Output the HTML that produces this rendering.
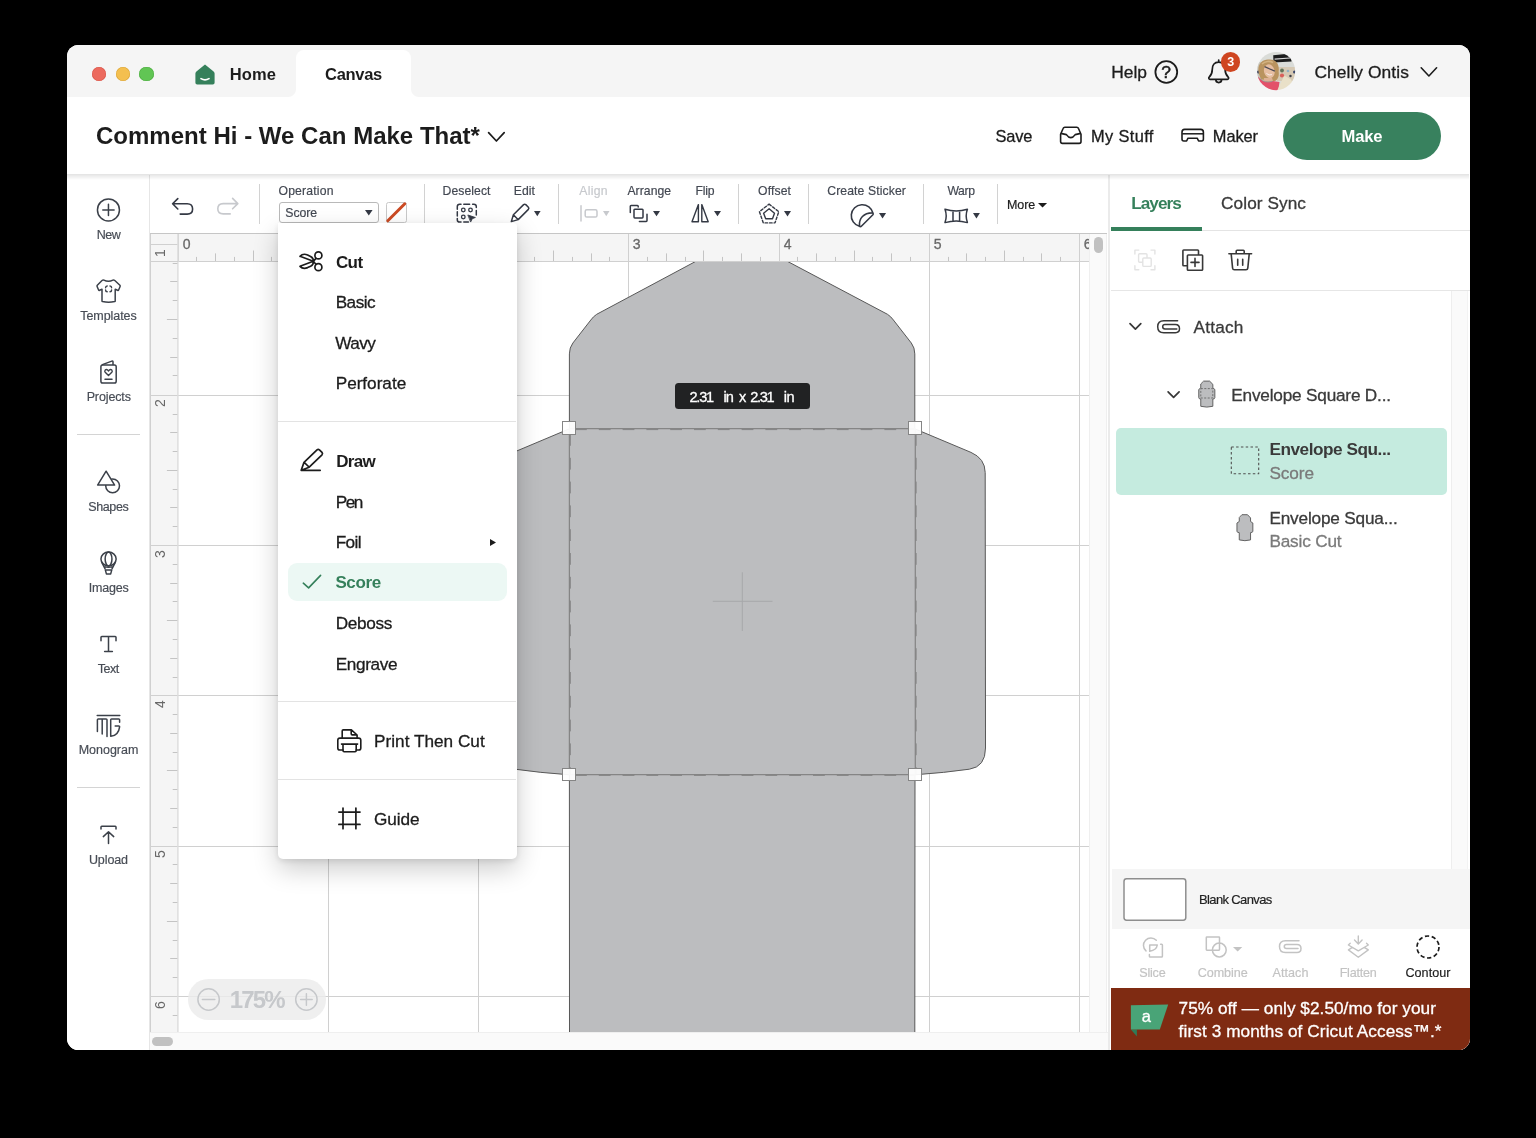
<!DOCTYPE html>
<html><head><meta charset="utf-8"><title>Design Space</title>
<style>
*{box-sizing:border-box;margin:0;padding:0}
html,body{width:1536px;height:1138px;background:#000;overflow:hidden}
body{font-family:"Liberation Sans",sans-serif;color:#1c1c1c;position:relative}
#win{position:absolute;left:67px;top:45px;width:1403px;height:1005px;border-radius:11.5px;overflow:hidden;background:#fff}
#pg{position:absolute;left:-67px;top:-45px;width:1536px;height:1138px;will-change:transform}
#pg div,#pg svg,#pg span{position:absolute}
.t{white-space:nowrap;line-height:30px;height:30px}
svg{overflow:visible}
#titlebar{left:66px;top:44px;width:1404px;height:53px;background:#f5f5f5}
#ctab{left:295.6px;top:50px;width:115.4px;height:48px;background:#fff;border-radius:8px 8px 0 0}
#header{left:66px;top:97px;width:1403px;height:78px;background:#fff}
#hshadow{left:66px;top:174px;width:1403px;height:6px;background:linear-gradient(rgba(0,0,0,.11),rgba(0,0,0,0));z-index:50}
#sidebar{left:66px;top:175px;width:84px;height:875px;background:#fff;border-right:1px solid #e6e6e6}
#toolbar{left:150px;top:175px;width:960px;height:58px;background:#fff}
#rpanel{left:1110px;top:175px;width:360px;height:875px;background:#fff}

</style></head>
<body>
<div id="win"><div id="pg">
<div id="titlebar"></div>
<div id="ctab"></div>
<div id="header"></div>
<div id="sidebar"></div>
<div id="toolbar"></div>
<div id="rpanel"></div>
<div id="hshadow"></div>
<!-- title -->
<div style="left:91.9px;top:66.7px;width:14.2px;height:14.2px;border-radius:50%;background:#ec6a5e;box-shadow:inset 0 0 0 0.6px #d9584c"></div>
<div style="left:115.7px;top:66.7px;width:14.2px;height:14.2px;border-radius:50%;background:#f4bf4f;box-shadow:inset 0 0 0 0.6px #dba63a"></div>
<div style="left:139.4px;top:66.7px;width:14.2px;height:14.2px;border-radius:50%;background:#61c554;box-shadow:inset 0 0 0 0.6px #4fae43"></div>
<svg style="left:195px;top:63.5px" width="20" height="21" viewBox="0 0 20 21"><path d="M10 0.6 L18.6 7.6 Q19.6 8.4 19.6 9.6 V18.8 Q19.6 20.6 17.8 20.6 H2.2 Q0.4 20.6 0.4 18.8 V9.6 Q0.4 8.4 1.4 7.6 Z" fill="#35805b"/><path d="M6 14.6 Q10 17.2 14 14.6" stroke="#fff" stroke-width="1.7" fill="none" stroke-linecap="round"/></svg>
<span class="t" style="left:229.70px;top:59.00px;font-size:16.5px;font-weight:700;color:#1c1c1c;letter-spacing:0.143px;">Home</span>
<span class="t" style="left:325.00px;top:59.00px;font-size:16.5px;font-weight:700;color:#1c1c1c;letter-spacing:-0.288px;">Canvas</span>
<div style="left:287.6px;top:89px;width:8px;height:8px;background:radial-gradient(circle at 0 0,#f5f5f5 7.5px,#fff 8.5px)"></div>
<div style="left:411px;top:89px;width:8px;height:8px;background:radial-gradient(circle at 100% 0,#f5f5f5 7.5px,#fff 8.5px)"></div>
<span class="t" style="left:1111.20px;top:57.00px;font-size:17.4px;font-weight:400;color:#1c1c1c;letter-spacing:-0.019px;-webkit-text-stroke:0.3px;">Help</span>
<svg style="left:1154px;top:60px" width="24" height="24" viewBox="0 0 24 24"><circle cx="12.3" cy="12" r="10.9" fill="none" stroke="#1c1c1c" stroke-width="1.8"/></svg>
<span class="t" style="left:1161.37px;top:57.00px;font-size:17.4px;font-weight:400;color:#1c1c1c;-webkit-text-stroke:0.3px;-webkit-text-stroke:0.5px;">?</span>
<svg style="left:1206px;top:58px" width="26" height="27" viewBox="0 0 26 27"><path d="M12.7 2 V4.2 M12.7 4.2 C8.2 4.2 6.3 7.6 6.3 11.2 C6.3 15.6 5.2 17.2 3.2 19.2 C2.4 20 2.8 21.3 4 21.3 H21.4 C22.6 21.3 23 20 22.2 19.2 C20.2 17.2 19.1 15.6 19.1 11.2 C19.1 7.6 17.2 4.2 12.7 4.2 Z M9.8 21.6 C9.8 23.4 11 24.6 12.7 24.6 C14.4 24.6 15.6 23.4 15.6 21.6" fill="none" stroke="#1c1c1c" stroke-width="1.7" stroke-linecap="round" stroke-linejoin="round"/></svg>
<div style="left:1221px;top:52.3px;width:19.4px;height:19.4px;border-radius:50%;background:#cf4520"></div>
<span class="t" style="left:1227.23px;top:47.00px;font-size:12.5px;font-weight:700;color:#fff;">3</span>
<svg style="left:1257px;top:52.4px" width="38.2" height="38.2" viewBox="0 0 38.2 38.2"><defs><clipPath id="av"><circle cx="19.1" cy="19.1" r="19.1"/></clipPath><filter id="bl" x="-10%" y="-10%" width="120%" height="120%"><feGaussianBlur stdDeviation="0.55"/></filter></defs><g clip-path="url(#av)"><g filter="url(#bl)">
<rect x="-2" y="-2" width="42" height="42" fill="#dadcd8"/>
<rect x="20" y="15" width="20" height="14" fill="#d6c9b4"/>
<rect x="0" y="10" width="8" height="16" fill="#c9c7bd"/>
<circle cx="1.5" cy="20" r="1.6" fill="#3d4763"/>
<circle cx="25" cy="18.5" r="1.9" fill="#62745a"/><circle cx="25" cy="23.5" r="2.1" fill="#d9605a"/><circle cx="31" cy="19" r="1.3" fill="#8fb0c4"/><circle cx="33.5" cy="24" r="1.2" fill="#3a3a44"/><circle cx="37.5" cy="20" r="1.5" fill="#39456a"/>
<path d="M16.2 3.2 L33.6 1.6 L34.6 9.6 L16.6 10.6 Z" fill="#1b1c1d"/>
<path d="M17.6 7.1 L33 6" stroke="#d8d8d8" stroke-width="1.1"/>
<path d="M2 22 C-0.5 13 5 7 12 7.6 C19 7 22.8 12.5 21.6 19.5 C22.6 24 20.4 28.5 17 29.5 L4 27.5 Z" fill="#b9935f"/>
<path d="M5 12 C8 9 13 8.6 16 10.6" stroke="#d3b281" stroke-width="1.6" fill="none"/>
<path d="M7 26 L15 26 L17 32 L6 32 Z" fill="#deb195"/>
<ellipse cx="12.3" cy="19.2" rx="5.3" ry="6.9" fill="#e6bea3" transform="rotate(-14 12.3 19.2)"/>
<path d="M7.6 14.6 L17.8 19.2" stroke="#4c4953" stroke-width="1.25"/>
<path d="M9.4 21.4 Q12 24 15 22.6" stroke="#f6ece6" stroke-width="1" fill="none"/>
<path d="M1 24.5 C5 29.5 10 30.6 15.5 29 L22.5 30 L21 40 H-1 Z" fill="#e3516b"/>
<path d="M2.2 25.6 C6 30 10.5 30.8 15.6 29.2" stroke="#7fae9e" stroke-width="0.7" fill="none"/>
<path d="M19.5 40 L26.8 24.6 Q27.8 23.6 29 24.4 L34 27.6 L38.5 36 V40 Z" fill="#e9e0c8"/>
</g></g></svg>
<span class="t" style="left:1314.40px;top:57.00px;font-size:17.4px;font-weight:400;color:#1c1c1c;letter-spacing:0.065px;-webkit-text-stroke:0.3px;">Chelly Ontis</span>
<svg style="left:1420px;top:66px" width="18" height="12" viewBox="0 0 18 12"><path d="M1.2 1.8 L8.9 10 L16.6 1.8" fill="none" stroke="#1c1c1c" stroke-width="1.6" stroke-linecap="round" stroke-linejoin="round"/></svg>
<!-- header -->
<span class="t" style="left:96.00px;top:120.50px;font-size:24px;font-weight:700;color:#1c1c1c;letter-spacing:0.012px;">Comment Hi - We Can Make That*</span>
<svg style="left:487px;top:131px" width="18" height="12" viewBox="0 0 18 12"><path d="M1.6 1.6 L9.4 10 L17.2 1.6" fill="none" stroke="#1c1c1c" stroke-width="1.7" stroke-linecap="round" stroke-linejoin="round"/></svg>
<span class="t" style="left:995.60px;top:121.00px;font-size:16.4px;font-weight:400;color:#1c1c1c;letter-spacing:-0.164px;-webkit-text-stroke:0.3px;">Save</span>
<svg style="left:1059px;top:126px" width="24" height="19" viewBox="0 0 24 19"><path d="M1.6 8.2 L4.2 2.2 Q4.6 1.2 5.8 1.2 H17.8 Q19 1.2 19.4 2.2 L22 8.2 V15.6 Q22 17.4 20.2 17.4 H3.4 Q1.6 17.4 1.6 15.6 Z" fill="none" stroke="#1c1c1c" stroke-width="1.6" stroke-linejoin="round"/><path d="M1.8 7.4 L7.4 8.6 Q9.4 11.6 11.8 11.6 Q14.2 11.6 16.2 8.6 L21.8 7.4" fill="none" stroke="#1c1c1c" stroke-width="1.6" stroke-linejoin="round"/></svg>
<span class="t" style="left:1091.00px;top:121.00px;font-size:16.4px;font-weight:400;color:#1c1c1c;letter-spacing:0.363px;-webkit-text-stroke:0.3px;">My Stuff</span>
<svg style="left:1181px;top:128px" width="24" height="15" viewBox="0 0 24 15"><path d="M3.6 1.4 H19.6 Q22.4 1.4 22.4 4.2 V11 Q22.4 13 20.6 13 H17.6 L16.2 10.2 H7 L5.6 13 H2.8 Q1 13 1 11 V4.2 Q1 1.4 3.6 1.4 Z" fill="none" stroke="#1c1c1c" stroke-width="1.6" stroke-linejoin="round"/><path d="M1.2 5.8 H22.2" stroke="#1c1c1c" stroke-width="1.5"/></svg>
<span class="t" style="left:1212.80px;top:121.00px;font-size:16.4px;font-weight:400;color:#1c1c1c;letter-spacing:-0.073px;-webkit-text-stroke:0.3px;">Maker</span>
<div style="left:1282.5px;top:112px;width:158.5px;height:47.5px;border-radius:24px;background:#38815e"></div>
<span class="t" style="left:1341.60px;top:121.50px;font-size:16.6px;font-weight:700;color:#fff;letter-spacing:-0.167px;">Make</span>
<!-- sidebar -->
<svg style="left:94px;top:195px" width="30" height="30" viewBox="94 195 30 30" fill="none" stroke="#3b4049" stroke-width="1.5" stroke-linecap="round" stroke-linejoin="round"><circle cx="108.45" cy="209.9" r="11"/><path d="M102.8 209.9 H114.1 M108.45 204.2 V215.6"/></svg>
<span class="t" style="left:96.85px;top:220.00px;font-size:12.5px;font-weight:400;color:#474c55;letter-spacing:-0.581px;-webkit-text-stroke:0.18px;">New</span>
<svg style="left:94px;top:276px" width="30" height="30" viewBox="94 276 30 30" fill="none" stroke="#3b4049" stroke-width="1.5" stroke-linecap="round" stroke-linejoin="round"><path d="M103.9 280.1 Q108.4 282.4 112.9 280.1 Q113.9 279.8 114.8 280.5 L119.9 285.2 Q120.4 285.8 120.1 286.5 L118.6 290 Q118.3 290.6 117.6 290.3 L115.2 289.2 V301 Q115.2 301.5 114.7 301.6 Q108.6 302.8 102.5 301.6 Q102 301.5 102 301 V289.2 L99.6 290.3 Q98.9 290.6 98.6 290 L97.1 286.5 Q96.8 285.8 97.3 285.2 L102 280.5 Q102.9 279.8 103.9 280.1 Z"/><path d="M105.6 287.8 Q105.6 286 107.2 286 M110 286 Q111.6 286 111.6 287.8 M111.6 290 Q111.6 291.8 110 291.8 M107.2 291.8 Q105.6 291.8 105.6 290" stroke-width="1.4"/></svg>
<span class="t" style="left:80.25px;top:301.00px;font-size:12.5px;font-weight:400;color:#474c55;letter-spacing:-0.062px;-webkit-text-stroke:0.18px;">Templates</span>
<svg style="left:96px;top:356px" width="26" height="30" viewBox="96 356 26 30" fill="none" stroke="#3b4049" stroke-width="1.5" stroke-linecap="round" stroke-linejoin="round"><rect x="100.9" y="364.9" width="15.3" height="18.2" rx="1.8"/><path d="M102.4 364.6 L111.8 361.1 Q113 360.7 113 361.9 V364.4"/><path d="M108.5 375.6 L105.2 372.3 Q104.3 371.2 105.2 370.1 Q106.4 369 107.6 370.1 L108.5 370.9 L109.4 370.1 Q110.6 369 111.8 370.1 Q112.7 371.2 111.8 372.3 Z" stroke-width="1.4"/><path d="M105 379.2 H112"/></svg>
<span class="t" style="left:86.65px;top:382.00px;font-size:12.5px;font-weight:400;color:#474c55;letter-spacing:-0.118px;-webkit-text-stroke:0.18px;">Projects</span>
<div style="left:77px;top:434.3px;width:63px;height:1px;background:#d4d4d4"></div>
<svg style="left:94px;top:466px" width="30" height="30" viewBox="94 466 30 30" fill="none" stroke="#3b4049" stroke-width="1.5" stroke-linecap="round" stroke-linejoin="round"><circle cx="112.6" cy="485.8" r="6.9"/><path d="M106.1 471.2 L114.6 485.1 H97.6 Z" fill="#fff"/></svg>
<span class="t" style="left:88.30px;top:492.00px;font-size:12.5px;font-weight:400;color:#474c55;letter-spacing:-0.395px;-webkit-text-stroke:0.18px;">Shapes</span>
<svg style="left:96px;top:548px" width="26" height="30" viewBox="96 548 26 30" fill="none" stroke="#3b4049" stroke-width="1.5" stroke-linecap="round" stroke-linejoin="round"><ellipse cx="108.55" cy="559" rx="7.6" ry="6.9"/><ellipse cx="108.55" cy="559" rx="3.4" ry="6.9"/><path d="M101.9 562.6 L105 568.6 M115.2 562.6 L112.1 568.6 M104.2 566.6 Q108.5 568 112.9 566.6 M105.3 569.9 H111.8 L110.7 573.9 H106.4 Z"/></svg>
<span class="t" style="left:88.75px;top:573.00px;font-size:12.5px;font-weight:400;color:#474c55;letter-spacing:-0.220px;-webkit-text-stroke:0.18px;">Images</span>
<svg style="left:96px;top:632px" width="26" height="24" viewBox="96 632 26 24" fill="none" stroke="#3b4049" stroke-width="1.5" stroke-linecap="round" stroke-linejoin="round"><path d="M101 640.8 V637.2 Q101 636.4 101.8 636.4 H115.2 Q116 636.4 116 637.2 V640.8 M108.5 636.6 V651.4 M104.6 651.5 H112.4"/></svg>
<span class="t" style="left:97.65px;top:654.00px;font-size:12.5px;font-weight:400;color:#474c55;letter-spacing:-0.413px;-webkit-text-stroke:0.18px;">Text</span>
<svg style="left:94px;top:712px" width="30" height="28" viewBox="94 712 30 28" fill="none" stroke="#3b4049" stroke-width="1.5" stroke-linecap="round" stroke-linejoin="round"><path d="M97.2 715.4 H119.8 M97.4 731.6 V719.8 Q97.4 718.9 98.3 718.9 H106.1 Q107 718.9 107 719.8 V736.4 M102.2 719 V734 M110.7 736.3 V719.8 Q110.7 718.9 111.6 718.9 H118.7 Q119.6 718.9 119.6 719.8 V722.2 M115.2 726 H118.8 Q119.7 726 119.6 726.9 Q118.6 735.4 110.9 736.3"/></svg>
<span class="t" style="left:78.65px;top:735.00px;font-size:12.5px;font-weight:400;color:#474c55;letter-spacing:-0.007px;-webkit-text-stroke:0.18px;">Monogram</span>
<div style="left:77px;top:787px;width:63px;height:1px;background:#d4d4d4"></div>
<svg style="left:96px;top:822px" width="26" height="26" viewBox="96 822 26 26" fill="none" stroke="#3b4049" stroke-width="1.5" stroke-linecap="round" stroke-linejoin="round"><path d="M101 829.1 V827 Q101 826.2 101.8 826.2 H115.2 Q116 826.2 116 827 V829.1 M108.5 843.5 V832 M103.3 836.6 L108.5 831.7 L113.7 836.6"/></svg>
<span class="t" style="left:88.95px;top:845.00px;font-size:12.5px;font-weight:400;color:#474c55;letter-spacing:-0.105px;-webkit-text-stroke:0.18px;">Upload</span>
<!-- toolbar -->
<svg style="left:170px;top:196px" width="26" height="22" viewBox="170 196 26 22" fill="none" stroke="#343944" stroke-width="1.6" stroke-linecap="round" stroke-linejoin="round"><path d="M177.8 198.6 L172.6 203.8 L177.8 209 M173 203.8 H187.2 Q192.6 203.8 192.6 209 Q192.6 214.1 187.2 214.1 H180.2"/></svg>
<svg style="left:215px;top:196px" width="26" height="22" viewBox="215 196 26 22" fill="none" stroke="#c7c9cd" stroke-width="1.6" stroke-linecap="round" stroke-linejoin="round"><path d="M232.6 198.4 L237.8 203.6 L232.6 208.8 M237.4 203.6 H223.2 Q217.8 203.6 217.8 208.8 Q217.8 213.9 223.2 213.9 H230.2"/></svg>
<div style="left:259.0px;top:184px;width:1px;height:40px;background:#d2d2d2"></div>
<span class="t" style="left:278.50px;top:176.00px;font-size:12.2px;font-weight:400;color:#434852;letter-spacing:0.180px;-webkit-text-stroke:0.18px;">Operation</span>
<div style="left:278.5px;top:202px;width:100.5px;height:20.5px;border:1px solid #b9b9b9;border-radius:3px;background:#fff"></div>
<span class="t" style="left:285.30px;top:198.00px;font-size:12.3px;font-weight:400;color:#434852;letter-spacing:-0.101px;-webkit-text-stroke:0.18px;">Score</span>
<svg style="left:364.8px;top:209.8px" width="7.60" height="5.40" viewBox="364.8 209.8 7.60 5.40"><path d="M364.8 209.8 H372.4 L368.6 215.2 Z" fill="#343944"/></svg>
<div style="left:385.8px;top:202px;width:20.8px;height:20.5px;border:1px solid #c9c9c9;border-radius:2.5px;background:#fff;overflow:hidden"></div>
<svg style="left:386px;top:202px" width="21" height="21" viewBox="386 202 21 21" fill="none" stroke="#cb4a23" stroke-width="3" stroke-linecap="round" stroke-linejoin="round"><path d="M387.8 220.8 L404.8 203.8"/></svg>
<div style="left:424.0px;top:184px;width:1px;height:40px;background:#d2d2d2"></div>
<span class="t" style="left:442.50px;top:176.00px;font-size:12.2px;font-weight:400;color:#434852;letter-spacing:0.077px;-webkit-text-stroke:0.18px;">Deselect</span>
<svg style="left:455px;top:201px" width="24" height="24" viewBox="455 201 24 24" fill="none" stroke="#343944" stroke-width="1.5" stroke-linecap="round" stroke-linejoin="round"><path d="M457.3 209.3 V206.6 Q457.3 204.2 459.7 204.2 H461 M463.8 204.2 H469.6 M472.6 204.2 H473.9 Q476.3 204.2 476.3 206.6 V207.6 M476.3 210.6 V215 M457.3 211.8 V216 M457.3 218.6 V219.7 Q457.3 222.1 459.7 222.1 H461 M463.8 222.1 H468.4"/><circle cx="463.3" cy="210" r="1.8" stroke-width="1.3"/><circle cx="470.5" cy="210" r="1.8" stroke-width="1.3"/><circle cx="463.3" cy="217" r="1.8" stroke-width="1.3"/><path d="M468.2 215.1 L475.4 217.5 L472.3 218.7 L470.8 221.7 Z" fill="#343944" stroke-width="0.8"/></svg>
<span class="t" style="left:513.80px;top:176.00px;font-size:12.2px;font-weight:400;color:#434852;letter-spacing:0.052px;-webkit-text-stroke:0.18px;">Edit</span>
<svg style="left:508px;top:201px" width="24" height="24" viewBox="508 201 24 24" fill="none" stroke="#343944" stroke-width="1.5" stroke-linecap="round" stroke-linejoin="round"><path d="M511.3 221.6 L513.4 214.8 L523.6 204.6 Q524.7 203.7 525.8 204.6 L528.4 207.2 Q529.3 208.3 528.4 209.4 L518.2 219.6 Z M513.6 214.9 L518 219.4"/></svg>
<svg style="left:534px;top:210.7px" width="6.60" height="5.30" viewBox="534 210.7 6.60 5.30"><path d="M534 210.7 H540.6 L537.3 216 Z" fill="#343944"/></svg>
<div style="left:558.0px;top:184px;width:1px;height:40px;background:#d2d2d2"></div>
<span class="t" style="left:579.25px;top:176.00px;font-size:12.2px;font-weight:400;color:#c7c9cd;letter-spacing:0.289px;-webkit-text-stroke:0.18px;">Align</span>
<svg style="left:579px;top:203px" width="22" height="20" viewBox="579 203 22 20" fill="none" stroke="#c7c9cd" stroke-width="1.5" stroke-linecap="round" stroke-linejoin="round"><path d="M581 205.8 V221"/><rect x="585.2" y="209.8" width="11.8" height="7.2" rx="1.6"/></svg>
<svg style="left:603.1px;top:210.7px" width="6.50" height="5.30" viewBox="603.1 210.7 6.50 5.30"><path d="M603.1 210.7 H609.6 L606.35 216 Z" fill="#c7c9cd"/></svg>
<span class="t" style="left:627.40px;top:176.00px;font-size:12.2px;font-weight:400;color:#434852;letter-spacing:0.061px;-webkit-text-stroke:0.18px;">Arrange</span>
<svg style="left:628px;top:203px" width="22" height="21" viewBox="628 203 22 21" fill="none" stroke="#343944" stroke-width="1.5" stroke-linecap="round" stroke-linejoin="round"><rect x="634" y="209.3" width="9" height="8.6" rx="0.8"/><path d="M630.3 212.6 V206.2 Q630.3 205.4 631.1 205.4 H637.4 Q638.2 205.4 638.2 206.2 V207 M647 214.2 V220.6 Q647 221.4 646.2 221.4 H639.4"/></svg>
<svg style="left:653.1px;top:210.7px" width="7.00" height="5.30" viewBox="653.1 210.7 7.00 5.30"><path d="M653.1 210.7 H660.1 L656.6 216 Z" fill="#343944"/></svg>
<span class="t" style="left:695.40px;top:176.00px;font-size:12.2px;font-weight:400;color:#434852;letter-spacing:-0.147px;-webkit-text-stroke:0.18px;">Flip</span>
<svg style="left:689px;top:202px" width="22" height="22" viewBox="689 202 22 22" fill="none" stroke="#343944" stroke-width="1.4" stroke-linecap="round" stroke-linejoin="round"><path d="M698.4 204.6 V221.7 H692 Z M701.8 204.6 V221.7 H708.2 Z"/></svg>
<svg style="left:714.3px;top:210.7px" width="7.00" height="5.30" viewBox="714.3 210.7 7.00 5.30"><path d="M714.3 210.7 H721.3 L717.8 216 Z" fill="#343944"/></svg>
<div style="left:738.3px;top:184px;width:1px;height:40px;background:#d2d2d2"></div>
<span class="t" style="left:758.05px;top:176.00px;font-size:12.2px;font-weight:400;color:#434852;letter-spacing:0.114px;-webkit-text-stroke:0.18px;">Offset</span>
<svg style="left:757px;top:202px" width="24" height="24" viewBox="757 202 24 24" fill="none" stroke="#343944" stroke-width="1.5" stroke-linecap="round" stroke-linejoin="round"><path d="M769.1 204.1 L778.8 211.7 L775 222.9 H763.3 L759.4 211.7 Z" stroke-dasharray="2.6 1.9" stroke-width="1.4"/><path d="M769.1 208.8 L774.5 213.2 L772.5 218.8 H765.7 L763.6 213.2 Z" stroke-width="1.4"/></svg>
<svg style="left:783.6px;top:210.7px" width="7.00" height="5.50" viewBox="783.6 210.7 7.00 5.50"><path d="M783.6 210.7 H790.6 L787.1 216.2 Z" fill="#343944"/></svg>
<div style="left:808.1px;top:184px;width:1px;height:40px;background:#d2d2d2"></div>
<span class="t" style="left:827.25px;top:176.00px;font-size:12.2px;font-weight:400;color:#434852;letter-spacing:0.109px;-webkit-text-stroke:0.18px;">Create Sticker</span>
<svg style="left:848px;top:202px" width="28" height="28" viewBox="848 202 28 28" fill="none" stroke="#343944" stroke-width="1.6" stroke-linecap="round" stroke-linejoin="round"><path d="M873 213.2 A11 11 0 1 0 859.4 226.3 Q860.6 227 861.6 226 L872.9 214.8 Q873.5 214 873 213.2 M859.5 226 C858.7 218.2 863.8 212.8 872.4 212.9"/></svg>
<svg style="left:878.9px;top:213.2px" width="7.10" height="5.40" viewBox="878.9 213.2 7.10 5.40"><path d="M878.9 213.2 H886 L882.45 218.6 Z" fill="#343944"/></svg>
<div style="left:923.1px;top:184px;width:1px;height:40px;background:#d2d2d2"></div>
<span class="t" style="left:947.40px;top:176.00px;font-size:12.2px;font-weight:400;color:#434852;letter-spacing:-0.357px;-webkit-text-stroke:0.18px;">Warp</span>
<svg style="left:942px;top:207px" width="28" height="18" viewBox="942 207 28 18" fill="none" stroke="#343944" stroke-width="1.5" stroke-linecap="round" stroke-linejoin="round"><path d="M945 209.2 Q956.2 212.6 967.4 209.2 Q965 215.8 967.4 222.6 Q956.2 219.2 945 222.6 Q947.4 215.8 945 209.2 Z M953 210.9 V220.8 M959.6 210.9 V220.8"/></svg>
<svg style="left:973.4px;top:213.2px" width="6.90" height="5.40" viewBox="973.4 213.2 6.90 5.40"><path d="M973.4 213.2 H980.3 L976.8499999999999 218.6 Z" fill="#343944"/></svg>
<div style="left:996.9px;top:184px;width:1px;height:40px;background:#d2d2d2"></div>
<span class="t" style="left:1007.00px;top:190.00px;font-size:12.5px;font-weight:400;color:#1c1c1c;letter-spacing:-0.100px;-webkit-text-stroke:0.18px;">More</span>
<svg style="left:1037.6px;top:203.2px" width="9.10" height="4.40" viewBox="1037.6 203.2 9.10 4.40"><path d="M1037.6 203.2 H1046.7 L1042.15 207.6 Z" fill="#1c1c1c"/></svg>
<!-- canvas -->
<div style="left:150px;top:233px;width:940px;height:800px;background:#fff"></div>
<svg style="left:0;top:0" width="1536" height="1138" viewBox="0 0 1536 1138" fill="none" stroke="#d0d0d0" stroke-width="1"><path d="M328.5 262 V1032"/><path d="M478.5 262 V1032"/><path d="M628.5 262 V1032"/><path d="M779.5 262 V1032"/><path d="M929.5 262 V1032"/><path d="M1079.5 262 V1032"/><path d="M178 395.5 H1090"/><path d="M178 545.5 H1090"/><path d="M178 695.5 H1090"/><path d="M178 846.5 H1090"/><path d="M178 996.5 H1090"/></svg>
<svg style="left:178px;top:262px" width="912" height="770" viewBox="178 262 912 770"><path d="M717 250 H766 L887.5 314.3 Q891 316.6 893.4 320 L911.3 343 Q914.8 347.6 914.8 353.9 L914.8 428.8 L971 452.4 Q985 458.4 985.2 472.5 L985.5 748 Q985.5 766.8 969.4 769.2 Q945 772.7 915 774.8 L914.8 1040 H569.5 L569.4 774.8 Q539.4 772.7 515 769.2 Q498.9 766.8 498.9 748 L499.2 472.5 Q499.4 458.4 513.4 452.4 L569.4 428.8 L569.4 353.9 Q569.4 347.6 572.9 343 L590.8 320 Q593.2 316.6 596.7 314.3 Z" fill="#bcbdbf" stroke="#585858" stroke-width="1"/><g fill="none" stroke="#858585" stroke-width="1.25"><path d="M569.4 428.7 H915 M569.4 774.7 H915 M569.4 428.7 V774.7 M915.3 428.7 V774.7"/></g><g fill="none" stroke="#848484" stroke-width="1" stroke-dasharray="11.8 12"><path d="M575 429.6 H915 M575 775.4 H915 M570.3 434 V774.7 M916.1 434 V774.7"/></g><path d="M712.8 601.3 H772.5 M742.3 572.3 V631" stroke="#a7a8aa" stroke-width="1" fill="none"/></svg>
<div style="left:562.1px;top:421.09999999999997px;width:13.6px;height:13.6px;background:rgba(255,255,255,.94);border:1px solid #858585"></div>
<div style="left:908.3000000000001px;top:421.09999999999997px;width:13.6px;height:13.6px;background:rgba(255,255,255,.94);border:1px solid #858585"></div>
<div style="left:562.1px;top:767.8000000000001px;width:13.6px;height:13.6px;background:rgba(255,255,255,.94);border:1px solid #858585"></div>
<div style="left:908.3000000000001px;top:767.8000000000001px;width:13.6px;height:13.6px;background:rgba(255,255,255,.94);border:1px solid #858585"></div>
<div style="left:674.8px;top:383.3px;width:135.3px;height:25.4px;border-radius:3.5px;background:#212223"></div>
<span class="t" style="left:689.50px;top:382.00px;font-size:14.6px;font-weight:400;color:#fff;letter-spacing:-1.266px;-webkit-text-stroke:0.3px;">2.31</span>
<span class="t" style="left:723.60px;top:382.00px;font-size:14.6px;font-weight:400;color:#fff;letter-spacing:-1.088px;-webkit-text-stroke:0.3px;">in</span>
<span class="t" style="left:739.10px;top:382.00px;font-size:14.6px;font-weight:400;color:#fff;-webkit-text-stroke:0.3px;">x</span>
<span class="t" style="left:750.20px;top:382.00px;font-size:14.6px;font-weight:400;color:#fff;letter-spacing:-1.332px;-webkit-text-stroke:0.3px;">2.31</span>
<span class="t" style="left:783.80px;top:382.00px;font-size:14.6px;font-weight:400;color:#fff;letter-spacing:-0.488px;-webkit-text-stroke:0.3px;">in</span>
<div style="left:150px;top:233px;width:957px;height:29px;background:#f5f5f5"></div>
<svg style="left:0;top:0" width="1536" height="1138" viewBox="0 0 1536 1138" fill="none" stroke-width="1"><path d="M178.5 234 V262" stroke="#d0d0d0"/><path d="M196.5 256.9 V262" stroke="#c4c4c4"/><path d="M215.5 253.4 V262" stroke="#c4c4c4"/><path d="M234.5 256.9 V262" stroke="#c4c4c4"/><path d="M253.5 250.5 V262" stroke="#c4c4c4"/><path d="M271.5 256.9 V262" stroke="#c4c4c4"/><path d="M290.5 253.4 V262" stroke="#c4c4c4"/><path d="M309.5 256.9 V262" stroke="#c4c4c4"/><path d="M328.5 234 V262" stroke="#d0d0d0"/><path d="M347.5 256.9 V262" stroke="#c4c4c4"/><path d="M365.5 253.4 V262" stroke="#c4c4c4"/><path d="M384.5 256.9 V262" stroke="#c4c4c4"/><path d="M403.5 250.5 V262" stroke="#c4c4c4"/><path d="M422.5 256.9 V262" stroke="#c4c4c4"/><path d="M440.5 253.4 V262" stroke="#c4c4c4"/><path d="M459.5 256.9 V262" stroke="#c4c4c4"/><path d="M478.5 234 V262" stroke="#d0d0d0"/><path d="M497.5 256.9 V262" stroke="#c4c4c4"/><path d="M516.5 253.4 V262" stroke="#c4c4c4"/><path d="M534.5 256.9 V262" stroke="#c4c4c4"/><path d="M553.5 250.5 V262" stroke="#c4c4c4"/><path d="M572.5 256.9 V262" stroke="#c4c4c4"/><path d="M591.5 253.4 V262" stroke="#c4c4c4"/><path d="M609.5 256.9 V262" stroke="#c4c4c4"/><path d="M628.5 234 V262" stroke="#d0d0d0"/><path d="M647.5 256.9 V262" stroke="#c4c4c4"/><path d="M666.5 253.4 V262" stroke="#c4c4c4"/><path d="M685.5 256.9 V262" stroke="#c4c4c4"/><path d="M703.5 250.5 V262" stroke="#c4c4c4"/><path d="M722.5 256.9 V262" stroke="#c4c4c4"/><path d="M741.5 253.4 V262" stroke="#c4c4c4"/><path d="M760.5 256.9 V262" stroke="#c4c4c4"/><path d="M779.5 234 V262" stroke="#d0d0d0"/><path d="M797.5 256.9 V262" stroke="#c4c4c4"/><path d="M816.5 253.4 V262" stroke="#c4c4c4"/><path d="M835.5 256.9 V262" stroke="#c4c4c4"/><path d="M854.5 250.5 V262" stroke="#c4c4c4"/><path d="M872.5 256.9 V262" stroke="#c4c4c4"/><path d="M891.5 253.4 V262" stroke="#c4c4c4"/><path d="M910.5 256.9 V262" stroke="#c4c4c4"/><path d="M929.5 234 V262" stroke="#d0d0d0"/><path d="M948.5 256.9 V262" stroke="#c4c4c4"/><path d="M966.5 253.4 V262" stroke="#c4c4c4"/><path d="M985.5 256.9 V262" stroke="#c4c4c4"/><path d="M1004.5 250.5 V262" stroke="#c4c4c4"/><path d="M1023.5 256.9 V262" stroke="#c4c4c4"/><path d="M1041.5 253.4 V262" stroke="#c4c4c4"/><path d="M1060.5 256.9 V262" stroke="#c4c4c4"/><path d="M1079.5 234 V262" stroke="#d0d0d0"/><path d="M150 261.5 H1089" stroke="#d0d0d0"/></svg>
<span class="t" style="left:182.70px;top:229.00px;font-size:14px;font-weight:400;color:#686868;-webkit-text-stroke:0.3px;">0</span>
<span class="t" style="left:332.70px;top:229.00px;font-size:14px;font-weight:400;color:#686868;-webkit-text-stroke:0.3px;">1</span>
<span class="t" style="left:482.70px;top:229.00px;font-size:14px;font-weight:400;color:#686868;-webkit-text-stroke:0.3px;">2</span>
<span class="t" style="left:632.70px;top:229.00px;font-size:14px;font-weight:400;color:#686868;-webkit-text-stroke:0.3px;">3</span>
<span class="t" style="left:783.70px;top:229.00px;font-size:14px;font-weight:400;color:#686868;-webkit-text-stroke:0.3px;">4</span>
<span class="t" style="left:933.70px;top:229.00px;font-size:14px;font-weight:400;color:#686868;-webkit-text-stroke:0.3px;">5</span>
<span class="t" style="left:1083.70px;top:229.00px;font-size:14px;font-weight:400;color:#686868;-webkit-text-stroke:0.3px;">6</span>
<div style="left:150px;top:234px;width:28px;height:798px;background:#f5f5f5"></div>
<svg style="left:0;top:0" width="1536" height="1138" viewBox="0 0 1536 1138" fill="none" stroke-width="1"><path d="M150.5 244.5 H178" stroke="#d0d0d0"/><path d="M172.7 263.5 H178" stroke="#c4c4c4"/><path d="M170.2 281.5 H178" stroke="#c4c4c4"/><path d="M172.7 300.5 H178" stroke="#c4c4c4"/><path d="M166.9 319.5 H178" stroke="#c4c4c4"/><path d="M172.7 338.5 H178" stroke="#c4c4c4"/><path d="M170.2 357.5 H178" stroke="#c4c4c4"/><path d="M172.7 375.5 H178" stroke="#c4c4c4"/><path d="M150.5 395.5 H178" stroke="#d0d0d0"/><path d="M172.7 414.5 H178" stroke="#c4c4c4"/><path d="M170.2 432.5 H178" stroke="#c4c4c4"/><path d="M172.7 451.5 H178" stroke="#c4c4c4"/><path d="M166.9 470.5 H178" stroke="#c4c4c4"/><path d="M172.7 489.5 H178" stroke="#c4c4c4"/><path d="M170.2 507.5 H178" stroke="#c4c4c4"/><path d="M172.7 526.5 H178" stroke="#c4c4c4"/><path d="M150.5 545.5 H178" stroke="#d0d0d0"/><path d="M172.7 564.5 H178" stroke="#c4c4c4"/><path d="M170.2 583.5 H178" stroke="#c4c4c4"/><path d="M172.7 601.5 H178" stroke="#c4c4c4"/><path d="M166.9 620.5 H178" stroke="#c4c4c4"/><path d="M172.7 639.5 H178" stroke="#c4c4c4"/><path d="M170.2 658.5 H178" stroke="#c4c4c4"/><path d="M172.7 677.5 H178" stroke="#c4c4c4"/><path d="M150.5 695.5 H178" stroke="#d0d0d0"/><path d="M172.7 714.5 H178" stroke="#c4c4c4"/><path d="M170.2 733.5 H178" stroke="#c4c4c4"/><path d="M172.7 752.5 H178" stroke="#c4c4c4"/><path d="M166.9 770.5 H178" stroke="#c4c4c4"/><path d="M172.7 789.5 H178" stroke="#c4c4c4"/><path d="M170.2 808.5 H178" stroke="#c4c4c4"/><path d="M172.7 827.5 H178" stroke="#c4c4c4"/><path d="M150.5 846.5 H178" stroke="#d0d0d0"/><path d="M172.7 864.5 H178" stroke="#c4c4c4"/><path d="M170.2 883.5 H178" stroke="#c4c4c4"/><path d="M172.7 902.5 H178" stroke="#c4c4c4"/><path d="M166.9 921.5 H178" stroke="#c4c4c4"/><path d="M172.7 940.5 H178" stroke="#c4c4c4"/><path d="M170.2 958.5 H178" stroke="#c4c4c4"/><path d="M172.7 977.5 H178" stroke="#c4c4c4"/><path d="M150.5 996.5 H178" stroke="#d0d0d0"/><path d="M172.7 1015.5 H178" stroke="#c4c4c4"/><path d="M150.5 234 V1032" stroke="#d0d0d0"/><path d="M177.9 234 V1032" stroke="#dcdcdc" stroke-width="1.4"/><path d="M150 261.5 H178" stroke="#d0d0d0"/></svg>
<span class="t" style="left:144.9px;top:237.5px;width:30px;text-align:center;font-size:14px;color:#686868;transform:rotate(-90deg)">1</span>
<span class="t" style="left:144.9px;top:388.40000000000003px;width:30px;text-align:center;font-size:14px;color:#686868;transform:rotate(-90deg)">2</span>
<span class="t" style="left:144.9px;top:538.6800000000001px;width:30px;text-align:center;font-size:14px;color:#686868;transform:rotate(-90deg)">3</span>
<span class="t" style="left:144.9px;top:688.96px;width:30px;text-align:center;font-size:14px;color:#686868;transform:rotate(-90deg)">4</span>
<span class="t" style="left:144.9px;top:839.2400000000001px;width:30px;text-align:center;font-size:14px;color:#686868;transform:rotate(-90deg)">5</span>
<span class="t" style="left:144.9px;top:989.5200000000001px;width:30px;text-align:center;font-size:14px;color:#686868;transform:rotate(-90deg)">6</span>
<div style="left:150px;top:232.6px;width:957px;height:1.9px;background:#c6c6c6"></div>
<div style="left:1089px;top:234.3px;width:18px;height:798px;background:#fafafa;border-left:1px solid #efefef;border-right:1px solid #efefef"></div>
<div style="left:1093.5px;top:237px;width:9.6px;height:16.3px;border-radius:5px;background:#c1c1c1"></div>
<div style="left:150px;top:1032px;width:960px;height:18px;background:#fafafa;border-top:1px solid #efefef"></div>
<div style="left:151.7px;top:1036.8px;width:21px;height:9.3px;border-radius:5px;background:#c1c1c1"></div>
<div style="left:188.4px;top:979.3px;width:137.8px;height:40.6px;border-radius:20.3px;background:rgba(236,236,236,.82)"></div>
<svg style="left:190px;top:985px" width="136" height="30" viewBox="190 985 136 30" fill="none" stroke="#c6c8cb" stroke-width="1.5" stroke-linecap="round"><circle cx="208.6" cy="999.5" r="10.7"/><path d="M202.4 999.5 H214.8"/><circle cx="306.4" cy="999.5" r="10.7"/><path d="M300.6 999.5 H312.2 M306.4 993.7 V1005.3"/></svg>
<span class="t" style="left:229.80px;top:984.50px;font-size:24px;font-weight:700;color:#c6c8cb;letter-spacing:-1.880px;">175%</span>
<!-- rpanel -->
<div style="left:1108.3px;top:175px;width:1.8px;height:875px;background:#ebebeb"></div>
<span class="t" style="left:1131.30px;top:188.00px;font-size:17.2px;font-weight:700;color:#35805b;letter-spacing:-0.994px;">Layers</span>
<span class="t" style="left:1221.10px;top:188.00px;font-size:17.2px;font-weight:400;color:#3a3a3a;letter-spacing:0.088px;-webkit-text-stroke:0.3px;">Color Sync</span>
<div style="left:1111px;top:230px;width:359px;height:1px;background:#e4e4e4"></div>
<div style="left:1111.2px;top:227.1px;width:90.6px;height:3.8px;background:#35805b"></div>
<svg style="left:1132px;top:247px" width="26" height="26" viewBox="1132 247 26 26" fill="none" stroke="#e3e3e3" stroke-width="1.4" stroke-linecap="round" stroke-linejoin="round"><path d="M1134.9 254 V250.1 H1138.8 M1151 250.1 H1154.9 V254 M1154.9 265.8 V269.7 H1151 M1138.8 269.7 H1134.9 V265.8"/><rect x="1138.6" y="253.8" width="8.4" height="8.4" rx="1"/><rect x="1142.8" y="258" width="8.4" height="8.4" rx="1" fill="#fff"/></svg>
<svg style="left:1180px;top:247px" width="26" height="26" viewBox="1180 247 26 26" fill="none" stroke="#383838" stroke-width="1.6" stroke-linecap="round" stroke-linejoin="round"><rect x="1182.9" y="250" width="15.6" height="15.8" rx="0.8"/><rect x="1187.4" y="255" width="15.2" height="15.2" rx="0.8" fill="#fff"/><path d="M1195 258.4 V266.4 M1191 262.4 H1199"/></svg>
<svg style="left:1226px;top:247px" width="28" height="26" viewBox="1226 247 28 26" fill="none" stroke="#383838" stroke-width="1.6" stroke-linecap="round" stroke-linejoin="round"><path d="M1228.9 253.8 H1251.6 M1236.2 253.4 V251.2 Q1236.2 250.3 1237.1 250.3 H1243.3 Q1244.2 250.3 1244.2 251.2 V253.4 M1231.2 254.2 L1232.6 268.2 Q1232.8 269.8 1234.4 269.8 H1246 Q1247.6 269.8 1247.8 268.2 L1249.2 254.2 M1237.7 259.2 V265.2 M1242.7 259.2 V265.2"/></svg>
<div style="left:1111px;top:290.1px;width:359px;height:1px;background:#e6e6e6"></div>
<div style="left:1451px;top:291px;width:17.2px;height:578.5px;background:#fafafa;border-left:1px solid #eeeeee;border-right:1px solid #f3f3f3"></div>
<svg style="left:1128px;top:321px" width="16" height="12" viewBox="1128 321 16 12" fill="none" stroke="#383838" stroke-width="1.7" stroke-linecap="round" stroke-linejoin="round"><path d="M1130 323.6 L1135.4 329.2 L1140.8 323.6"/></svg>
<svg style="left:1155px;top:318px" width="28" height="18" viewBox="1155 318 28 18" fill="none" stroke="#383838" stroke-width="1.5" stroke-linecap="round" stroke-linejoin="round"><path d="M1176.8 328.9 H1165 Q1162.7 328.9 1162.7 326.7 Q1162.7 324.5 1165 324.5 H1175.4 Q1179.5 324.5 1179.5 328.8 Q1179.5 332.7 1175.4 332.7 H1163.8 Q1157.7 332.7 1157.7 326.7 Q1157.7 320.8 1163.8 320.8 H1177.6"/></svg>
<span class="t" style="left:1193.50px;top:312.00px;font-size:17.2px;font-weight:400;color:#3a3a3a;letter-spacing:0.228px;-webkit-text-stroke:0.3px;">Attach</span>
<svg style="left:1166px;top:389px" width="16" height="12" viewBox="1166 389 16 12" fill="none" stroke="#383838" stroke-width="1.7" stroke-linecap="round" stroke-linejoin="round"><path d="M1168.1 391.8 L1173.6 397.4 L1179.1 391.8"/></svg>
<svg style="left:1196px;top:379px" width="22" height="30" viewBox="1196 379 22 30" fill="none" stroke="#383838" stroke-width="1.5" stroke-linecap="round" stroke-linejoin="round"><path d="M1204.02 381.10 H1209.58 L1212.85 384.35 V387.86 L1214.85 389.46 V397.61 Q1214.85 399.01 1212.85 399.01 V406.30 Q1206.80 407.90 1200.75 406.30 V399.01 Q1198.75 399.01 1198.75 397.61 V389.46 L1200.75 387.86 V384.35 Z" fill="#bcbdbf" stroke="#555" stroke-width="0.9"/><path d="M1200.8 388.6 H1212.8 V398 H1200.8 Z" stroke="#666" stroke-width="0.9" stroke-dasharray="2 1.5" stroke-linecap="butt"/></svg>
<span class="t" style="left:1231.30px;top:380.00px;font-size:17.2px;font-weight:400;color:#3a3a3a;letter-spacing:-0.194px;-webkit-text-stroke:0.3px;">Envelope Square D...</span>
<div style="left:1116px;top:428px;width:331px;height:67px;border-radius:5px;background:#c5ebdf"></div>
<svg style="left:1229px;top:445px" width="32" height="31" viewBox="1229 445 32 31" fill="none" stroke="#4f4f4f" stroke-width="1.1" stroke-linecap="round" stroke-linejoin="round"><rect x="1231.3" y="447" width="27.4" height="26.8" stroke-dasharray="2.5 2.3" stroke-linecap="butt"/></svg>
<span class="t" style="left:1269.40px;top:434.00px;font-size:17.2px;font-weight:700;color:#3a3a3a;letter-spacing:-0.454px;">Envelope Squ...</span>
<span class="t" style="left:1269.40px;top:458.00px;font-size:17.2px;font-weight:400;color:#7a7a7a;letter-spacing:-0.073px;-webkit-text-stroke:0.3px;">Score</span>
<svg style="left:1234px;top:512px" width="22" height="32" viewBox="1234 512 22 32" fill="none" stroke="#383838" stroke-width="1.5" stroke-linecap="round" stroke-linejoin="round"><path d="M1242.30 514.70 H1247.50 L1250.55 517.95 V521.46 L1252.85 523.06 V531.21 Q1252.85 532.61 1250.55 532.61 V539.90 Q1244.90 541.50 1239.25 539.90 V532.61 Q1236.95 532.61 1236.95 531.21 V523.06 L1239.25 521.46 V517.95 Z" fill="#bcbdbf" stroke="#555" stroke-width="0.9"/></svg>
<span class="t" style="left:1269.40px;top:503.00px;font-size:17.2px;font-weight:400;color:#3a3a3a;letter-spacing:-0.172px;-webkit-text-stroke:0.3px;">Envelope Squa...</span>
<span class="t" style="left:1269.40px;top:526.00px;font-size:17.2px;font-weight:400;color:#7a7a7a;letter-spacing:-0.165px;-webkit-text-stroke:0.3px;">Basic Cut</span>
<div style="left:1111.6px;top:869.4px;width:360px;height:59.6px;background:#f5f5f5"></div>
<svg style="left:1122px;top:876px" width="67" height="47" viewBox="1122 876 67 47" fill="none" stroke="#8e8e8e" stroke-width="1.5" stroke-linecap="round" stroke-linejoin="round"><rect x="1124" y="878.8" width="61.8" height="41.4" rx="2.6" fill="#fff"/></svg>
<span class="t" style="left:1199.00px;top:884.50px;font-size:13px;font-weight:400;color:#222;letter-spacing:-0.628px;-webkit-text-stroke:0.18px;">Blank Canvas</span>
<svg style="left:1140px;top:934px" width="26" height="26" viewBox="1140 934 26 26" fill="none" stroke="#c3c3c3" stroke-width="1.5" stroke-linecap="round" stroke-linejoin="round"><path d="M1156.3 940.3 A7.4 7.4 0 1 0 1146 950.9 M1149.7 945 H1157.3 Q1156.6 950 1149.7 951.3 Z M1160.6 944.2 H1161.6 Q1162.4 944.2 1162.4 945 V956.2 Q1162.4 957 1161.6 957 H1150.2 Q1149.4 957 1149.4 956.2 V954.6"/></svg>
<span class="t" style="left:1139.25px;top:958.00px;font-size:12.6px;font-weight:400;color:#c3c3c3;letter-spacing:-0.210px;-webkit-text-stroke:0.18px;">Slice</span>
<svg style="left:1204px;top:934px" width="40" height="26" viewBox="1204 934 40 26" fill="none" stroke="#c3c3c3" stroke-width="1.5" stroke-linecap="round" stroke-linejoin="round"><rect x="1206.3" y="937" width="13.2" height="13.2" rx="0.6"/><circle cx="1219.3" cy="950" r="6.9"/></svg>
<svg style="left:1233.1px;top:947.2px" width="9.3" height="4.5" viewBox="0 0 9.3 4.5"><path d="M0 0 H9.3 L4.65 4.5 Z" fill="#c3c3c3"/></svg>
<span class="t" style="left:1197.65px;top:958.00px;font-size:12.6px;font-weight:400;color:#c3c3c3;letter-spacing:-0.050px;-webkit-text-stroke:0.18px;">Combine</span>
<svg style="left:1277px;top:938px" width="28" height="18" viewBox="1277 938 28 18" fill="none" stroke="#c3c3c3" stroke-width="1.5" stroke-linecap="round" stroke-linejoin="round"><path d="M1298 948.5 H1286.4 Q1284.3 948.5 1284.3 946.5 Q1284.3 944.5 1286.4 944.5 H1297 Q1301 944.5 1301 948.6 Q1301 952.6 1297 952.6 H1285.4 Q1279.5 952.6 1279.5 946.6 Q1279.5 940.8 1285.4 940.8 H1299"/></svg>
<span class="t" style="left:1272.55px;top:958.00px;font-size:12.6px;font-weight:400;color:#c3c3c3;letter-spacing:0.036px;-webkit-text-stroke:0.18px;">Attach</span>
<svg style="left:1346px;top:934px" width="26" height="26" viewBox="1346 934 26 26" fill="none" stroke="#c3c3c3" stroke-width="1.4" stroke-linecap="round" stroke-linejoin="round"><path d="M1358.3 935.9 V943.8 M1354.5 940.1 L1358.3 943.9 L1362.1 940.1 M1350.2 943.2 L1348.4 945 L1358.3 950.8 L1368.3 945 L1366.5 943.2 M1351.6 947.9 L1348.4 949.9 L1358.3 957.2 L1368.3 949.9 L1365.1 947.9"/></svg>
<span class="t" style="left:1339.65px;top:958.00px;font-size:12.6px;font-weight:400;color:#c3c3c3;letter-spacing:-0.232px;-webkit-text-stroke:0.18px;">Flatten</span>
<svg style="left:1415px;top:934px" width="26" height="26" viewBox="1415 934 26 26" fill="none" stroke="#1c1c1c" stroke-width="1.7" stroke-linecap="round" stroke-linejoin="round"><circle cx="1428" cy="947" r="11" stroke-dasharray="4.3 2.61" stroke-linecap="butt"/></svg>
<span class="t" style="left:1405.45px;top:958.00px;font-size:12.6px;font-weight:400;color:#1c1c1c;letter-spacing:0.041px;-webkit-text-stroke:0.18px;">Contour</span>
<div style="left:1111.4px;top:987.7px;width:360px;height:63px;background:#7f2b12"></div>
<svg style="left:1128px;top:1002px" width="44" height="38" viewBox="1128 1002 44 38"><path d="M1130.9 1029.4 L1136.9 1036.4 V1029.4 Z" fill="#2f7b57"/><path d="M1130.9 1005.3 L1168.2 1004.5 L1159.8 1029.4 H1130.9 Z" fill="#49a477"/></svg>
<span class="t" style="left:1141.68px;top:1001.00px;font-size:16.5px;font-weight:400;color:#fff;-webkit-text-stroke:0.3px;">a</span>
<span class="t" style="left:1178.60px;top:993.00px;font-size:17.2px;font-weight:400;color:#fff;letter-spacing:0.050px;-webkit-text-stroke:0.3px;">75% off — only $2.50/mo for your</span>
<span class="t" style="left:1178.60px;top:1016.00px;font-size:17.2px;font-weight:400;color:#fff;letter-spacing:0.095px;-webkit-text-stroke:0.3px;">first 3 months of Cricut Access™.*</span>
<!-- dropdown -->
<div style="left:278px;top:223px;width:238.5px;height:635.5px;background:#fff;border-radius:0 4px 5px 5px;box-shadow:0 10px 26px rgba(0,0,0,.2),0 2px 6px rgba(0,0,0,.1)"></div>
<svg style="left:297px;top:249px" width="30" height="24" viewBox="297 249 30 24" fill="none" stroke="#1c1c1c" stroke-width="1.7" stroke-linecap="round" stroke-linejoin="round"><circle cx="318.4" cy="255.4" r="3.5"/><circle cx="318.4" cy="267.2" r="3.5"/><path d="M300 256.3 C302.4 253.7 304.8 253.8 307.6 255 L310.6 256.4 C312.9 257.6 313.6 259.4 313.3 261.3 L316 258.4 M300 256.3 L313.3 261.3 L315.9 264.3"/><path d="M300 266.3 C302.4 268.9 304.8 268.8 307.6 267.6 L310.6 266.2 C312.9 265 313.6 263.2 313.3 261.3 M300 266.3 L313.3 261.3"/></svg>
<span class="t" style="left:335.90px;top:247.50px;font-size:17px;font-weight:700;color:#1c1c1c;letter-spacing:-0.553px;">Cut</span>
<span class="t" style="left:335.70px;top:287.00px;font-size:17.2px;font-weight:400;color:#1c1c1c;letter-spacing:-0.538px;-webkit-text-stroke:0.3px;">Basic</span>
<span class="t" style="left:335.20px;top:328.00px;font-size:17.2px;font-weight:400;color:#1c1c1c;letter-spacing:-0.533px;-webkit-text-stroke:0.3px;">Wavy</span>
<span class="t" style="left:335.70px;top:368.00px;font-size:17.2px;font-weight:400;color:#1c1c1c;letter-spacing:-0.022px;-webkit-text-stroke:0.3px;">Perforate</span>
<div style="left:278px;top:421.3px;width:238px;height:1px;background:#e3e3e3"></div>
<svg style="left:298px;top:446px" width="28" height="28" viewBox="298 446 28 28" fill="none" stroke="#1c1c1c" stroke-width="1.7" stroke-linecap="round" stroke-linejoin="round"><path d="M301.2 470.3 H320.2 M301.2 470.2 L304 462.4 L317 449.8 Q318.2 448.8 319.4 449.8 L322 452.4 Q323 453.6 322 454.8 L309.2 467.2 Z M304.2 462.4 L309 467"/></svg>
<span class="t" style="left:336.30px;top:446.50px;font-size:17px;font-weight:700;color:#1c1c1c;letter-spacing:-0.750px;">Draw</span>
<span class="t" style="left:335.70px;top:487.00px;font-size:17.2px;font-weight:400;color:#1c1c1c;letter-spacing:-1.508px;-webkit-text-stroke:0.3px;">Pen</span>
<span class="t" style="left:335.70px;top:527.00px;font-size:17.2px;font-weight:400;color:#1c1c1c;letter-spacing:-0.597px;-webkit-text-stroke:0.3px;">Foil</span>
<svg style="left:490px;top:539.4px" width="6" height="7" viewBox="0 0 6 7"><path d="M0 0 L6 3.5 L0 7 Z" fill="#1c1c1c"/></svg>
<div style="left:287.5px;top:562.8px;width:219.5px;height:38.4px;border-radius:9px;background:#ecf8f4"></div>
<svg style="left:301px;top:573px" width="22" height="17" viewBox="301 573 22 17" fill="none" stroke="#35805b" stroke-width="1.6" stroke-linecap="round" stroke-linejoin="round"><path d="M303.3 583.2 L308.6 587.9 L320.6 575.4"/></svg>
<span class="t" style="left:335.40px;top:567.50px;font-size:17px;font-weight:700;color:#35805b;letter-spacing:-0.365px;">Score</span>
<span class="t" style="left:335.70px;top:608.00px;font-size:17.2px;font-weight:400;color:#1c1c1c;letter-spacing:-0.322px;-webkit-text-stroke:0.3px;">Deboss</span>
<span class="t" style="left:335.70px;top:649.00px;font-size:17.2px;font-weight:400;color:#1c1c1c;letter-spacing:-0.362px;-webkit-text-stroke:0.3px;">Engrave</span>
<div style="left:278px;top:701px;width:238px;height:1px;background:#e3e3e3"></div>
<svg style="left:335px;top:727px" width="28" height="27" viewBox="335 727 28 27" fill="none" stroke="#1c1c1c" stroke-width="1.6" stroke-linecap="round" stroke-linejoin="round"><path d="M342.2 738 V731 Q342.2 729.9 343.3 729.9 H351.4 L357.1 735 V738 M351.2 730 V733.8 Q351.2 734.9 352.3 734.9 H356.8"/><path d="M343 750 H339.9 Q337.8 750 337.8 747.9 V740.2 Q337.8 738.1 339.9 738.1 H358.7 Q360.8 738.1 360.8 740.2 V747.9 Q360.8 750 358.7 750 H356.2"/><path d="M341.5 744.1 H357.6 M343 744.3 V750.6 Q343 751.7 344.1 751.7 H355.1 Q356.2 751.7 356.2 750.6 V744.3"/></svg>
<span class="t" style="left:374.00px;top:726.00px;font-size:17.2px;font-weight:400;color:#1c1c1c;letter-spacing:0.016px;-webkit-text-stroke:0.3px;">Print Then Cut</span>
<div style="left:278px;top:778.8px;width:238px;height:1px;background:#e3e3e3"></div>
<svg style="left:336px;top:806px" width="27" height="25" viewBox="336 806 27 25" fill="none" stroke="#1c1c1c" stroke-width="1.7" stroke-linecap="round" stroke-linejoin="round"><path d="M343 808 V828.7 M355.9 808 V828.7 M338.9 812.1 H360 M338.9 824.4 H360"/></svg>
<span class="t" style="left:374.00px;top:804.00px;font-size:17.2px;font-weight:400;color:#1c1c1c;letter-spacing:-0.056px;-webkit-text-stroke:0.3px;">Guide</span>

</div></div>
</body></html>
